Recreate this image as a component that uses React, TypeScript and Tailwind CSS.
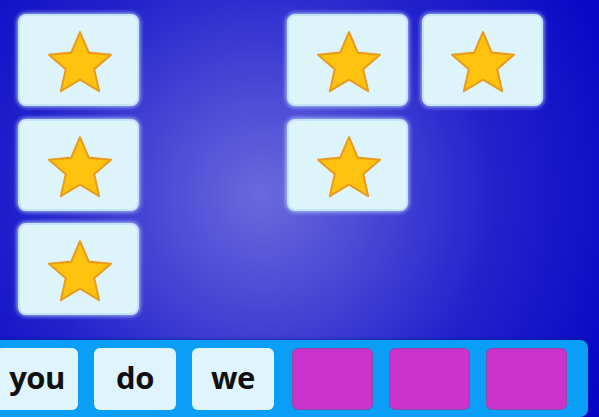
const Star = () => (
    <svg width="68" height="66" viewBox="0 0 100 96">
        <polygon
            points="50,4 62.9,34.2 95.6,37.2 70.9,58.8 78.2,90.8 50,74 21.8,90.8 29.1,58.8 4.4,37.2 37.1,34.2"
            fill="#ffc20e"
            stroke="#e89b1c"
            strokeWidth="3"
            strokeLinejoin="round"
        />
    </svg>
);

const cells = [true, false, true, true, true, false, true, false, true, false, false, false];

const words = ["you", "do", "we"];

const App = () => {
    return (
        <div
            className="w-[599px] h-[417px] overflow-hidden flex flex-col"
            style={{ background: "radial-gradient(circle at 262px 195px, #6a6adc 0%, #4b4bd6 25%, #2222cc 58%, #0404c4 100%)" }}
        >
            <div className="grid grid-cols-[repeat(4,121px)] grid-rows-[repeat(3,92px)] gap-x-[13.5px] gap-y-[12.5px] pl-[18px] pt-[14px]">
                {cells.map((filled, i) =>
                    filled ? (
                        <div
                            key={i}
                            className="rounded-[8px] bg-[#def4fb] border-2 border-[#c4e4fb] shadow-[0_0_4px_1px_rgba(200,225,255,0.8)] flex items-center justify-center pt-[4px] pl-[2px]"
                        >
                            <Star />
                        </div>
                    ) : (
                        <div key={i} />
                    )
                )}
            </div>
            <div className="mt-[25px] h-[80px] w-[588px] bg-[#0a9ef6] rounded-r-[8px] shadow-[0_-1px_3px_rgba(0,40,140,0.6)] flex gap-[16px] pt-[8px]">
                {words.map(w => (
                    <div
                        key={w}
                        className="first:ml-[-4px] w-[82px] h-[62px] rounded-[6px] bg-[#dff4fc] flex items-center justify-center text-[31px] font-bold text-[#111] leading-none pb-[4px] font-['Open_Sans',sans-serif] tracking-[-0.5px]"
                    >
                        {w}
                    </div>
                ))}
                {[0, 1, 2].map(i => (
                    <div key={i} className="first-of-type:ml-0 w-[81px] h-[62px] rounded-[6px] bg-[#cc33cc] border border-[#8a4aa8] [&:nth-child(4)]:ml-[2px]" />
                ))}
            </div>
        </div>
    );
};

export default App;
